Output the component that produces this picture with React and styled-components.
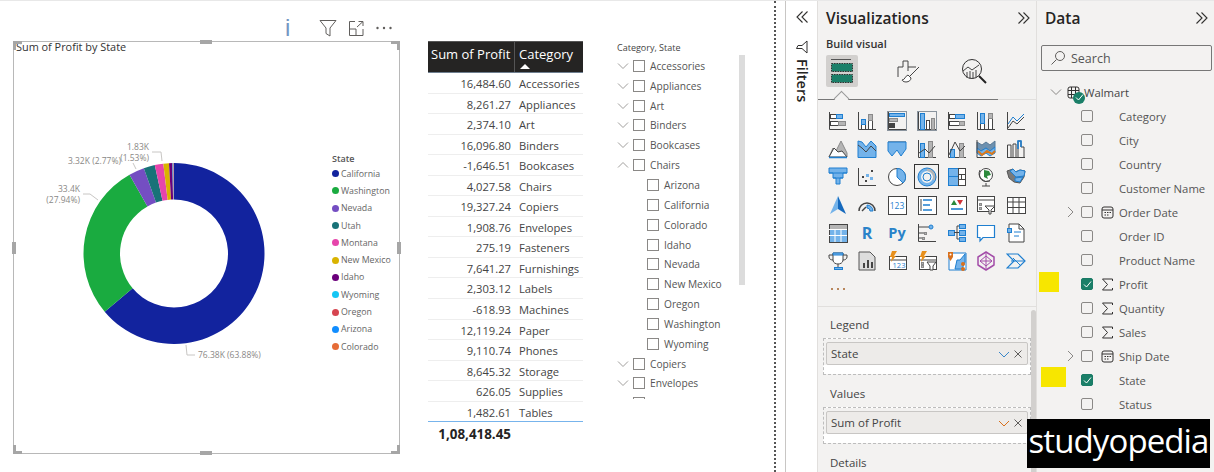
import React from "react";
import styled, { createGlobalStyle } from "styled-components";

const UI_FONT = `"Open Sans", "Noto Sans", sans-serif`;

const GlobalStyle = createGlobalStyle`
  html, body { margin: 0; padding: 0; background: #fff; }
  body { font-family: ${UI_FONT}; color: #252423; overflow: hidden; }
  * { box-sizing: border-box; }
`;

const Page = styled.div`
  position: relative;
  display: flex;
  width: 1214px;
  height: 472px;
  overflow: hidden;
  border-top: 1px solid #e8e8e8;
`;

const Canvas = styled.div`
  display: flex;
  align-items: flex-start;
  width: 776px;
  height: 100%;
  padding-left: 13px;
  border-right: 2px dotted #555;
  margin-right: 9px;
`;

const ChartColumn = styled.div`
  display: flex;
  flex-direction: column;
  width: 388px;
`;

const VisualHeader = styled.div`
  display: flex;
  align-items: center;
  height: 40px;
  padding-top: 14px;
  padding-left: 272px;
`;

const InfoMark = styled.span`
  width: 10px;
  font-size: 24px;
  line-height: 24px;
  color: #7397c2;
  font-family: "Liberation Sans", sans-serif;
  margin-right: 28px;
`;

const HeaderIcon = styled.svg`
  width: 20px;
  height: 20px;
  margin-right: 8px;
  flex: none;
`;

const ChartCard = styled.div`
  position: relative;
  width: 387px;
  height: 413px;
  border: 1px solid #b8b8b8;
`;

const ChartTitle = styled.div`
  height: 14px;
  padding-left: 2px;
  font-size: 10.9px;
  line-height: 10px;
  color: #333;
`;

const ChartBody = styled.div`
  display: flex;
  align-items: flex-start;
`;

const Handle = styled.span`
  position: absolute;
  background: #a6a6a6;
  ${(p) => p.$place}
`;

const CornerHandle = styled.span`
  position: absolute;
  width: 9px;
  height: 9px;
  border-color: #a6a6a6;
  border-style: solid;
  border-width: 0;
  ${(p) => p.$place}
`;

const Legend = styled.div`
  display: flex;
  flex-direction: column;
  padding-top: 96px;
  margin-left: 2px;
`;

const LegendTitle = styled.div`
  font-size: 9px;
  font-weight: 600;
  line-height: 13px;
  color: #555;
`;

const LegendRow = styled.div`
  display: flex;
  align-items: center;
  gap: 2px;
  height: 17.3px;
  font-size: 8.8px;
  color: #666;
  white-space: nowrap;
`;

const LegendDot = styled.span`
  width: 7px;
  height: 7px;
  border-radius: 50%;
  background: ${(p) => p.$color};
`;

const DataTable = styled.div`
  width: 155px;
  margin-left: 27px;
  margin-top: 40px;
`;

const TableHead = styled.div`
  display: grid;
  grid-template-columns: 86px 1fr;
  height: 32px;
  background: #252423;
  border-top: 1px solid #555;
  border-bottom: 1px solid #6f7f90;
  color: #fff;
  font-size: 13px;
`;

const HeadCell = styled.div`
  position: relative;
  padding: 3px 3px;
  line-height: 18px;
  white-space: nowrap;
  & + & { border-left: 1px solid #555; padding-left: 4px; }
`;

const SortArrow = styled.span`
  position: absolute;
  left: 5px;
  bottom: 3px;
  width: 0;
  height: 0;
  border-left: 5px solid transparent;
  border-right: 5px solid transparent;
  border-bottom: 5px solid #fff;
`;

const TableRow = styled.div`
  display: grid;
  grid-template-columns: 83px 1fr;
  column-gap: 8px;
  height: 20.55px;
  border-bottom: 1px solid #eeeeee;
  font-size: 11.2px;
  line-height: 22px;
  color: #444;
  white-space: nowrap;
`;

const NumberCell = styled.div`
  text-align: right;
`;

const TableTotal = styled.div`
  border-top: 1px solid #77b4ec;
  margin-top: -1px;
  font-size: 13.4px;
  font-weight: 700;
  line-height: 24px;
  color: #252423;
`;

const TotalValue = styled.div`
  width: 83px;
  text-align: right;
  white-space: nowrap;
`;

const Slicer = styled.div`
  position: relative;
  width: 130px;
  height: 359px;
  margin-left: 34px;
  margin-top: 40px;
`;

const SlicerTitle = styled.div`
  font-size: 9px;
  line-height: 14px;
  color: #444;
  margin-bottom: 1px;
`;

const SlicerList = styled.div`
  height: 343px;
  overflow: hidden;
`;

const SlicerRow = styled.div`
  display: flex;
  align-items: center;
  height: 19.85px;
  padding-left: ${(p) => (p.$child ? "30px" : "0")};
  font-size: 10.2px;
  color: #555;
  white-space: nowrap;
`;

const Chevron = styled.svg`
  width: 12px;
  height: 12px;
  margin-right: 4px;
  flex: none;
`;

const Box = styled.span`
  display: inline-flex;
  align-items: center;
  justify-content: center;
  width: 12px;
  height: 12px;
  flex: none;
  border: 1px solid ${(p) => (p.$checked ? "#197a65" : "#8a8886")};
  border-radius: ${(p) => (p.$round ? "2px" : "0")};
  background: ${(p) => (p.$checked ? "#1a7f68" : "transparent")};
  margin-right: ${(p) => p.$gap ?? 5}px;
`;

const SlicerScroll = styled.div`
  position: absolute;
  top: 14px;
  left: 122px;
  width: 6px;
  height: 230px;
  background: #dcdcdc;
`;

const FilterRail = styled.div`
  display: flex;
  flex-direction: column;
  align-items: center;
  width: 32px;
  height: 100%;
  flex: none;
  border-left: 1px solid #c8c6c4;
  padding-top: 9px;
`;

const RailIcon = styled.svg`
  margin-top: 16px;
  transform: rotate(90deg);
`;

const RailTitle = styled.div`
  writing-mode: vertical-rl;
  font-size: 14.5px;
  font-weight: 600;
  line-height: 16px;
  margin-top: 5px;
  color: #252423;
`;

const VizPanel = styled.div`
  position: relative;
  display: flex;
  flex-direction: column;
  width: 219px;
  height: 100%;
  flex: none;
  overflow: hidden;
  background: #f3f2f1;
  border-left: 1px solid #e1dfdd;
  & > * { flex: none; }
`;

const PanelHead = styled.div`
  display: flex;
  align-items: center;
  justify-content: space-between;
  height: 34px;
  padding: 0 5px 0 ${(p) => p.$pad}px;
  font-size: 15.5px;
  font-weight: 600;
  color: #252423;
`;

const SubHead = styled.div`
  padding-left: 8px;
  font-size: 11px;
  font-weight: 600;
  line-height: 18px;
  color: #333;
`;

const BuildTabs = styled.div`
  position: relative;
  display: flex;
  align-items: flex-start;
  height: 47px;
  padding: 2px 0 0 8px;
  border-bottom: 1px solid #e1dfdd;
`;

const TabUnderline = styled.span`
  position: absolute;
  left: 0;
  bottom: -1px;
  width: 180px;
  height: 1px;
  background: #777;
`;

const TabNotch = styled.span`
  position: absolute;
  left: 18px;
  bottom: -5px;
  width: 11px;
  height: 11px;
  transform: rotate(45deg);
  background: #f3f2f1;
  border-left: 1px solid #999;
  border-top: 1px solid #999;
`;

const TabButton = styled.span`
  display: flex;
  align-items: center;
  justify-content: center;
  width: 32px;
  height: 32px;
  border-radius: 2px;
  background: ${(p) => (p.$active ? "#d2d0ce" : "transparent")};
  margin-right: ${(p) => p.$gap}px;
`;

const IconGrid = styled.div`
  display: grid;
  grid-template-columns: repeat(7, 29.8px);
  grid-auto-rows: 28px;
  padding: 8px 0 0 7px;
  height: 207px;
  border-bottom: 1px solid #e1dfdd;
`;

const GridCell = styled.span`
  display: flex;
  align-items: center;
  justify-content: center;
  width: 25px;
  height: 25px;
  border: ${(p) => (p.$active ? "1px solid #333" : "1px solid transparent")};
`;

const WellLabel = styled.div`
  padding-left: 12px;
  font-size: 11.5px;
  line-height: 16px;
  color: #444;
  margin: ${(p) => p.$top}px 0 5px;
`;

const FieldWell = styled.div`
  height: 37px;
  margin: 0 5px;
  padding: 3px 2px 0;
  background: linear-gradient(#f3f2f1 26px, #fff 26px);
  border: 1px dashed #bdbdbd;
`;

const FieldPill = styled.div`
  display: flex;
  align-items: center;
  justify-content: space-between;
  height: 23px;
  padding: 0 4px;
  background: #edebe9;
  border: 1px solid #c8c6c4;
  border-radius: 2px;
  font-size: 11.5px;
  color: #444;
`;

const PillIcons = styled.span`
  display: flex;
  gap: 3px;
`;

const PanelScroll = styled.div`
  position: absolute;
  top: 309px;
  right: 0;
  width: 5px;
  height: 170px;
  border-radius: 3px;
  background: #d2d0ce;
`;

const DataPanel = styled.div`
  display: flex;
  flex-direction: column;
  flex: 1;
  height: 100%;
  background: #f3f2f1;
  border-left: 1px solid #e1dfdd;
`;

const SearchBox = styled.div`
  display: flex;
  align-items: center;
  gap: 5px;
  height: 26px;
  margin: 10px 2px 0 4px;
  padding-left: 8px;
  border: 1px solid #777;
  border-radius: 2px;
  font-size: 12.5px;
  color: #555;
`;

const TreeList = styled.div`
  padding-top: 9px;
`;

const ModelRow = styled.div`
  display: flex;
  align-items: center;
  height: 24px;
  padding-left: 13px;
  font-size: 11.3px;
  color: #444;
`;

const ModelIcon = styled.span`
  position: relative;
  display: flex;
  width: 17px;
  margin-left: 1px;
`;

const ModelBadge = styled.span`
  position: absolute;
  left: 6px;
  top: 6px;
  display: flex;
  align-items: center;
  justify-content: center;
  width: 12px;
  height: 12px;
  border-radius: 50%;
  background: #1a7f68;
`;

const FieldRow = styled.div`
  display: grid;
  grid-template-columns: 13px 20px 18px 1fr;
  align-items: center;
  height: 24px;
  padding-left: 31px;
  font-size: 11.3px;
  color: #555;
  white-space: nowrap;
`;

const ExpandSlot = styled.span`
  display: flex;
  margin-left: -4px;
`;

const TypeSlot = styled.span`
  display: flex;
  align-items: center;
`;

const Highlight = styled.span`
  position: absolute;
  background: #f7e600;
  left: ${(p) => p.$x}px;
  top: ${(p) => p.$y}px;
  width: ${(p) => p.$w}px;
  height: 20px;
`;

const Watermark = styled.div`
  position: absolute;
  left: 1027px;
  top: 418px;
  width: 183px;
  height: 49px;
  background: #000;
  color: #fff;
  font-size: 33px;
  letter-spacing: -0.9px;
  line-height: 44px;
  text-align: center;
  white-space: nowrap;
`;

const D = "#444";
const Bl = "#1f7fd0";
const Lb = "#74b3ea";
const Gr = "#b5b5b5";

const R = ({ x, y, w, h, k = "b" }) => {
  const st = {
    b: { fill: Lb, stroke: Bl },
    g: { fill: Gr, stroke: "#8a8a8a" },
    w: { fill: "#fff", stroke: D },
    d: { fill: D, stroke: D },
    n: { fill: "none", stroke: D },
  }[k];
  return <rect x={x + 0.5} y={y + 0.5} width={w} height={h} {...st} strokeWidth="1" />;
};
const Ln = ({ d, c = D, w = 1, f = "none" }) => <path d={d} stroke={c} strokeWidth={w} fill={f} />;
const Axes = () => <Ln d="M1.5 1V18.5H19" />;

const vizIcons = [
  <><Axes /><R x={2} y={3} w={6} h={4} k="w" /><R x={8} y={3} w={6} h={4} /><R x={2} y={10} w={8} h={4} k="w" /><R x={10} y={10} w={7} h={4} k="g" /></>,
  <><Axes /><R x={4} y={8} w={4} h={10} k="w" /><R x={4} y={8} w={4} h={5} /><R x={11} y={3} w={4} h={15} k="w" /><R x={11} y={3} w={4} h={6} k="g" /></>,
  <><rect x="0.5" y="0.5" width="19" height="19" fill="none" stroke="#8a949e" /><Axes /><R x={2} y={2} w={15} h={3} /><R x={2} y={7} w={8} h={3} k="g" /><R x={2} y={12} w={5} h={4} k="d" /></>,
  <><rect x="0.5" y="0.5" width="19" height="19" fill="none" stroke="#8a949e" /><Axes /><R x={3} y={2} w={4} h={16} /><R x={9} y={9} w={3} h={9} k="w" /><R x={14} y={7} w={3} h={11} k="g" /></>,
  <><Ln d="M1.5 1V18.5H19" /><R x={2} y={3} w={8} h={4} k="w" /><R x={8} y={3} w={9} h={4} /><R x={2} y={10} w={10} h={4} k="w" /><R x={12} y={10} w={5} h={4} k="g" /></>,
  <><Axes /><R x={4} y={2} w={4} h={16} k="w" /><R x={4} y={2} w={4} h={10} /><R x={12} y={2} w={4} h={16} k="w" /><R x={12} y={2} w={4} h={5} k="g" /></>,
  <><Axes /><Ln d="M2 13L7 6L11 10L18 3" c={Bl} /><Ln d="M2 17L7 10L11 13L18 6" c={D} /></>,
  <><Ln d="M1 18L5 9L8 12L13 2L19 14V18Z" f={Gr} c="#8a8a8a" /><Ln d="M1 18L6 9L10 13L14 12L19 18Z" f="#fff" c={D} /><Ln d="M1 18.5H19" c={Bl} w={1.5} /></>,
  <><Ln d="M1 2V18.5H19V7L14 2L9 8L5 3Z" f={Lb} c={Bl} /><Ln d="M1 6L5 9L9 13L14 7L19 12" c={D} /></>,
  <><Ln d="M1 3H19" c={D} /><Ln d="M1 3H19V10L14 17L10 11L5 17L1 12Z" f={Lb} c={Bl} /></>,
  <><Axes /><R x={3} y={4} w={4} h={14} /><R x={11} y={2} w={4} h={16} k="g" /><Ln d="M2 14L8 10L12 14L18 7" /></>,
  <><Axes /><R x={3} y={10} w={4} h={8} /><R x={12} y={4} w={4} h={14} k="g" /><Ln d="M2 16L8 3L13 12L18 7" /></>,
  <><Ln d="M1 3L6 6L10 3L14 6L19 2V8L14 12L10 9L5 12L1 9Z" f="#6d91b0" c="#5a7a96" /><Ln d="M1 9L5 12L10 9L14 12L19 8V14L14 17L10 14L5 17L1 14Z" f={Lb} c={Bl} /><Ln d="M2 12L6 16L11 12L16 15L19 12" c="#d9781c" w={2} /><Ln d="M1 1V18.5H19" /></>,
  <><Ln d="M1.5 18V6H5V18M7 18V5H10V18M12 18V2H15V8H18V18" /><Ln d="M12 10V2H15V8" c={Bl} w={1.6} /><Ln d="M1 18.5H19" /></>,
  <><Ln d="M1 1H19V6H15V11H12V17H8V11H5V6H1Z" f={Lb} c={Bl} /><Ln d="M1 6H19M5 11H15" c={Bl} /></>,
  <><Axes /><rect x="5" y="9" width="2" height="2" fill={D} /><rect x="9" y="7" width="3" height="3" fill={Lb} /><rect x="14" y="3" width="2" height="2" fill={D} /><rect x="13" y="10" width="3" height="3" fill={Lb} /><rect x="8" y="13" width="2" height="2" fill={D} /></>,
  <><circle cx="10" cy="10" r="8.5" fill="#fff" stroke={D} /><path d="M10 10V1.5A8.5 8.5 0 0 1 16 16Z" fill={Lb} stroke={Bl} /></>,
  <><circle cx="10" cy="10" r="7.5" fill="none" stroke={Lb} strokeWidth="3" /><path d="M10 2.5A7.5 7.5 0 0 1 17 13" fill="none" stroke={Gr} strokeWidth="3" /><circle cx="10" cy="10" r="4" fill="none" stroke={Bl} /><circle cx="10" cy="10" r="9" fill="none" stroke={Bl} /></>,
  <><R x={1} y={1} w={10} h={8} /><R x={1} y={9} w={10} h={9} /><R x={11} y={1} w={7} h={6} k="w" /><R x={11} y={7} w={3} h={5} k="w" /><R x={14} y={7} w={4} h={5} k="w" /><R x={11} y={12} w={7} h={6} k="w" /></>,
  <><circle cx="10" cy="8" r="6.5" fill="#fff" stroke={D} /><path d="M8 3L13 4L15 8L11 9L12 12L8 10Z" fill="#2c8a3c" /><Ln d="M14 14A8 8 0 0 1 4 3M10 16V19M6 19H14" /></>,
  <><Ln d="M1 4L7 2L9 5L14 3L19 4L18 10L14 16L8 15L3 11Z" f="#7a7a7a" c="#555" /><Ln d="M7 2L10 5L14 3L19 4L18 9L10 10L4 4Z" f={Lb} c={Bl} /><Ln d="M9 11L17 10L14 15L9 14Z" f={Lb} c={Bl} /></>,
  <><path d="M10 1L18 19L10 14Z" fill="#1569bd" /><path d="M10 1L2 19L10 14Z" fill="#74b3ea" /></>,
  <><path d="M2 16A8 8 0 0 1 18 16" fill="none" stroke={D} strokeWidth="1.5" /><path d="M10 10A6 6 0 0 1 16 16H13A3 3 0 0 0 10 13Z" fill={Lb} stroke={Bl} /><Ln d="M5 16L9 12" w={1.5} /></>,
  <><R x={1} y={1} w={18} h={18} k="w" /><text x="10" y="14" textAnchor="middle" fontSize="8.5" fill={Bl} fontFamily={UI_FONT}>123</text></>,
  <><R x={1} y={1} w={18} h={18} k="w" /><Ln d="M4 4V16" c={D} /><Ln d="M6 5H15M6 10H13M6 15H15" c={Bl} w={1.6} /></>,
  <><R x={1} y={1} w={18} h={18} k="w" /><path d="M4 10L7 5L10 10Z" fill="#2c8a3c" /><path d="M10 5H16L13 10Z" fill="#d13438" /><Ln d="M4 14H16" c={Bl} w={1.6} /></>,
  <><R x={1} y={1} w={17} h={15} k="w" /><Ln d="M1 5H18" /><R x={3} y={8} w={2} h={2} k="g" /><R x={3} y={12} w={2} h={2} k="g" /><Ln d="M9 11H19L15 15V19H13V15Z" f="#fff" /></>,
  <><R x={1} y={2} w={18} h={16} k="w" /><Ln d="M1 7H19M1 12.5H19M7 2V18M13 2V18" /></>,
  <><R x={1} y={1} w={18} h={18} k="n" /><rect x="2" y="2" width="17" height="4" fill={Gr} /><rect x="2" y="7" width="17" height="12" fill={Lb} /><Ln d="M1 6.5H19M1 12.5H19M7 6V19M13 6V19" c="#fff" /></>,
  <><text x="10" y="16" textAnchor="middle" fontSize="16" fontWeight="700" fill="#2a83c9" fontFamily={UI_FONT}>R</text></>,
  <><text x="10" y="15" textAnchor="middle" fontSize="14.5" fontWeight="700" fill="#2a83c9" fontFamily={UI_FONT}>Py</text></>,
  <><Axes /><Ln d="M2 4H12M2 10H7M2 15H5" /><circle cx="14" cy="4" r="2" fill={Lb} stroke={Bl} /><R x={7} y={9} w={2} h={2} k="g" /><R x={5} y={14} w={2} h={2} k="g" /></>,
  <><R x={1} y={7} w={6} h={5} /><R x={12} y={1} w={6} h={4} /><R x={12} y={7} w={6} h={5} /><R x={12} y={14} w={6} h={4} /><Ln d="M7 9.5H12M10 3V16H12M10 3H12" /></>,
  <><path d="M1.5 2.5H18.5V14.5H7L4 18V14.5H1.5Z" fill="#fff" stroke={Bl} strokeWidth="1.2" /></>,
  <><Ln d="M3 1H13L18 6V19H3Z" f="#fff" /><Ln d="M13 1V6H18" /><R x={1} y={5} w={4} h={4} /><Ln d="M8 9H15M8 13H13" c={Bl} /></>,
  <><Ln d="M5 2H15V9C15 12 12 13 10 13C8 13 5 12 5 9Z" f="#fff" /><Ln d="M5 2H15V4H5Z" f={Lb} c={Bl} /><Ln d="M5 4H1V6C1 8 3 9 5 9M15 4H19V6C19 8 17 9 15 9M10 13V16" /><R x={6} y={16} w={8} h={2} /></>,
  <><Ln d="M2 1H13L18 6V19H2Z" f="#ddd" c="#555" /><rect x="6" y="12" width="2" height="5" fill={D} /><rect x="10" y="9" width="2" height="8" fill={D} /><rect x="14" y="11" width="2" height="6" fill={D} /></>,
  <><R x={2} y={5} w={17} h={13} k="w" /><Ln d="M2 9H19" /><text x="12" y="16.5" textAnchor="middle" fontSize="7.5" fill={Bl} fontFamily={UI_FONT}>123</text><path d="M5 0H10L7 5H9L4 11L5 6H3Z" fill="#e8901c" /></>,
  <><R x={2} y={5} w={17} h={13} k="w" /><Ln d="M2 9H19" /><R x={4} y={11} w={2} h={2} k="g" /><R x={4} y={14} w={2} h={2} k="g" /><Ln d="M10 11H19L16 15V19H13V15Z" f="#fff" /><path d="M5 0H10L7 5H9L4 11L5 6H3Z" fill="#e8901c" /></>,
  <><Ln d="M2 2H19V19H2Z" f="#fff" c={Bl} /><Ln d="M8 18L10 9L13 9L18 3V11L15 18Z" f={Lb} c={Bl} /><path d="M1 1H6V6L3.5 10L1 6Z" fill="#d9701c" /><circle cx="3.5" cy="3.5" r="1" fill="#fff" /><circle cx="16" cy="13" r="2" fill="#d9701c" /><circle cx="16" cy="18" r="2" fill="#d9701c" /></>,
  <><path d="M10 1L18 6V14L10 19L2 14V6Z" fill="none" stroke="#a34ca8" strokeWidth="1.5" strokeLinejoin="round" /><path d="M10 1V19M4 10H16M4 10L10 5L16 10L10 15Z" fill="none" stroke="#a34ca8" /></>,
  <><path d="M1 3H12L19 10L12 17H1L8 10Z" fill="none" stroke={Bl} strokeWidth="1.2" /><Ln d="M5 10H19M7 7L15 15" c={Bl} /></>,
];

const Chev = ({ dir = "down", c = "#8a8886" }) => {
  const d = { down: "M1 3.5L6 8.5L11 3.5", up: "M1 8.5L6 3.5L11 8.5", right: "M4 1L9 6L4 11" }[dir];
  return (
    <Chevron viewBox="0 0 12 12">
      <path d={d} fill="none" stroke={c} strokeWidth="1" />
    </Chevron>
  );
};

const Double = ({ left }) => (
  <svg width="14" height="14" viewBox="0 0 14 14" style={left ? { transform: "scaleX(-1)" } : undefined}>
    <path d="M1.5 1.5L7 7L1.5 12.5M6.5 1.5L12 7L6.5 12.5" fill="none" stroke="#323130" strokeWidth="1.1" />
  </svg>
);

const SmallX = () => (
  <svg width="10" height="10" viewBox="0 0 10 10">
    <path d="M1.5 1.5L8.5 8.5M8.5 1.5L1.5 8.5" stroke="#605e5c" />
  </svg>
);

const SmallDown = ({ c }) => (
  <svg width="12" height="10" viewBox="0 0 12 10">
    <path d="M1 3L6 8L11 3" fill="none" stroke={c} />
  </svg>
);

const Sigma = () => (
  <svg width="13" height="13" viewBox="0 0 13 13">
    <path d="M11.5 3V1H1.5L6.5 6.5L1.5 12H11.5V10" fill="none" stroke="#323130" />
  </svg>
);

const Calendar = () => (
  <svg width="13" height="13" viewBox="0 0 13 13">
    <rect x="1" y="1" width="11" height="11" rx="2" fill="none" stroke="#323130" />
    <path d="M1 4H12" stroke="#323130" />
    <path d="M3.5 6.5H5M6 6.5H7.5M8.5 6.5H10M3.5 9H5M6 9H7.5" stroke="#323130" />
  </svg>
);

const Tick = () => (
  <svg width="9" height="9" viewBox="0 0 9 9">
    <path d="M1 4.5L3.5 7L8 1.5" fill="none" stroke="#fff" strokeWidth="1" />
  </svg>
);

const slices = [
  ["California", 63.88, "#12239E"],
  ["Washington", 27.94, "#1AAB40"],
  ["Nevada", 2.77, "#744EC2"],
  ["Utah", 2.0, "#197278"],
  ["Montana", 1.53, "#E645AB"],
  ["New Mexico", 1.0, "#D9B300"],
  ["Idaho", 0.6, "#6B007B"],
  ["Wyoming", 0.08, "#15C6F4"],
  ["Oregon", 0.08, "#D64550"],
  ["Arizona", 0.06, "#118DFF"],
  ["Colorado", 0.06, "#E66C37"],
];

const arc = (from, to) => {
  const [cx, cy, ro, ri] = [174, 253.5, 90.5, 54];
  const pt = (a, r) => {
    const t = (a / 100) * 2 * Math.PI;
    return `${(cx + r * Math.sin(t)).toFixed(2)} ${(cy - r * Math.cos(t)).toFixed(2)}`;
  };
  const big = to - from > 50 ? 1 : 0;
  return `M${pt(from, ro)}A${ro} ${ro} 0 ${big} 1 ${pt(to, ro)}L${pt(to, ri)}A${ri} ${ri} 0 ${big} 0 ${pt(from, ri)}Z`;
};

const donutPaths = slices.reduce(
  (acc, [name, pct, color]) => {
    acc.list.push(<path key={name} d={arc(acc.at, acc.at + pct)} fill={color} />);
    acc.at += pct;
    return acc;
  },
  { at: 0, list: [] }
).list;

const rows = [
  ["16,484.60", "Accessories"], ["8,261.27", "Appliances"], ["2,374.10", "Art"], ["16,096.80", "Binders"],
  ["-1,646.51", "Bookcases"], ["4,027.58", "Chairs"], ["19,327.24", "Copiers"], ["1,908.76", "Envelopes"],
  ["275.19", "Fasteners"], ["7,641.27", "Furnishings"], ["2,303.12", "Labels"], ["-618.93", "Machines"],
  ["12,119.24", "Paper"], ["9,110.74", "Phones"], ["8,645.32", "Storage"], ["626.05", "Supplies"], ["1,482.61", "Tables"],
];

const slicerItems = [
  ["Accessories"], ["Appliances"], ["Art"], ["Binders"], ["Bookcases"], ["Chairs", "open"],
  ["Arizona", "child"], ["California", "child"], ["Colorado", "child"], ["Idaho", "child"], ["Nevada", "child"],
  ["New Mexico", "child"], ["Oregon", "child"], ["Washington", "child"], ["Wyoming", "child"],
  ["Copiers"], ["Envelopes"], ["Fasteners"],
];

const fields = [
  ["Category"], ["City"], ["Country"], ["Customer Name"], ["Order Date", "date"], ["Order ID"], ["Product Name"],
  ["Profit", "sum", true], ["Quantity", "sum"], ["Sales", "sum"], ["Ship Date", "date"], ["State", null, true], ["Status"],
];

const ChartLabel = ({ x, y, children, end }) => (
  <text x={x} y={y} fontSize="8.5" fill="#8a8886" textAnchor={end ? "end" : "start"} fontFamily={UI_FONT}>
    {children}
  </text>
);

export default function App() {
  return (
    <>
      <GlobalStyle />
      <Page>
        <Canvas>
          <ChartColumn>
            <VisualHeader>
              <InfoMark>i</InfoMark>
              <HeaderIcon viewBox="0 0 20 20">
                <path d="M2 2.5H18L12 10V18L8 15.5V10Z" fill="none" stroke="#605e5c" />
              </HeaderIcon>
              <HeaderIcon viewBox="0 0 20 20">
                <path d="M9 3.5H3.5V17.5H17V11M3.5 11H10V17.5M11 9L17 3.5M12.5 3.5H17V8" fill="none" stroke="#605e5c" />
              </HeaderIcon>
              <HeaderIcon viewBox="0 0 20 20">
                <circle cx="3.5" cy="10" r="1.2" fill="#605e5c" />
                <circle cx="10" cy="10" r="1.2" fill="#605e5c" />
                <circle cx="16.5" cy="10" r="1.2" fill="#605e5c" />
              </HeaderIcon>
            </VisualHeader>
            <ChartCard>
              <CornerHandle $place="left:-1px;top:-1px;border-left-width:3px;border-top-width:3px;" />
              <CornerHandle $place="right:-1px;top:-1px;border-right-width:3px;border-top-width:3px;" />
              <CornerHandle $place="left:-1px;bottom:-1px;border-left-width:3px;border-bottom-width:3px;" />
              <CornerHandle $place="right:-1px;bottom:-1px;border-right-width:3px;border-bottom-width:3px;" />
              <Handle $place="left:186px;top:-2px;width:12px;height:4px;" />
              <Handle $place="left:186px;bottom:-2px;width:12px;height:4px;" />
              <Handle $place="left:-2px;top:200px;width:4px;height:12px;" />
              <Handle $place="right:-2px;top:200px;width:4px;height:12px;" />
              <ChartTitle>Sum of Profit by State</ChartTitle>
              <ChartBody>
                <svg width="316" height="396" viewBox="14 56 316 396" style={{ flex: "none" }}>
                  {donutPaths}
                  <Ln d="M152 152H161L162 161" c="#c8c6c4" />
                  <Ln d="M133 163L136 169" c="#c8c6c4" />
                  <Ln d="M83 194H90L98 200" c="#c8c6c4" />
                  <Ln d="M186 345L187 355H195" c="#c8c6c4" />
                  <ChartLabel x={149} y={150} end>1.83K</ChartLabel>
                  <ChartLabel x={149} y={161} end>(1.53%)</ChartLabel>
                  <ChartLabel x={121} y={164} end>3.32K (2.77%)</ChartLabel>
                  <ChartLabel x={80} y={192} end>33.4K</ChartLabel>
                  <ChartLabel x={80} y={203} end>(27.94%)</ChartLabel>
                  <ChartLabel x={198} y={358}>76.38K (63.88%)</ChartLabel>
                </svg>
                <Legend>
                  <LegendTitle>State</LegendTitle>
                  {slices.map(([name, , color]) => (
                    <LegendRow key={name}>
                      <LegendDot $color={color} />
                      {name}
                    </LegendRow>
                  ))}
                </Legend>
              </ChartBody>
            </ChartCard>
          </ChartColumn>

          <DataTable>
            <TableHead>
              <HeadCell>Sum of Profit</HeadCell>
              <HeadCell>
                Category
                <SortArrow />
              </HeadCell>
            </TableHead>
            {rows.map(([value, name]) => (
              <TableRow key={name}>
                <NumberCell>{value}</NumberCell>
                <div>{name}</div>
              </TableRow>
            ))}
            <TableTotal>
              <TotalValue>1,08,418.45</TotalValue>
            </TableTotal>
          </DataTable>

          <Slicer>
            <SlicerTitle>Category, State</SlicerTitle>
            <SlicerList>
              {slicerItems.map(([name, kind], i) => (
                <SlicerRow key={name + i} $child={kind === "child"}>
                  {kind !== "child" && <Chev dir={kind === "open" ? "up" : "down"} c="#a19f9d" />}
                  <Box />
                  {name}
                </SlicerRow>
              ))}
            </SlicerList>
            <SlicerScroll />
          </Slicer>
        </Canvas>

        <FilterRail>
          <Double left />
          <RailIcon width="14" height="14" viewBox="0 0 14 14">
            <path d="M1 2H13L8.5 7V12.5L5.5 11V7Z" fill="none" stroke="#323130" />
          </RailIcon>
          <RailTitle>Filters</RailTitle>
        </FilterRail>

        <VizPanel>
          <PanelHead $pad={8}>
            Visualizations
            <Double />
          </PanelHead>
          <SubHead>Build visual</SubHead>
          <BuildTabs>
            <TabButton $active $gap={35}>
              <svg width="24" height="26" viewBox="0 0 24 26">
                <path d="M1 1.5H21" stroke="#555" />
                <rect x="1.5" y="5.5" width="21" height="8" fill="#1a7f68" stroke="#333" strokeDasharray="1.5 1" />
                <rect x="1.5" y="16.5" width="21" height="8" fill="#1a7f68" stroke="#333" strokeDasharray="1.5 1" />
              </svg>
            </TabButton>
            <TabButton $gap={33}>
              <svg width="24" height="24" viewBox="0 0 24 24">
                <path d="M1 18V8H6V2H11V12M11 8H19" fill="none" stroke="#444" />
                <path d="M22 8L13 17M9 23C6 23 5 21 5 21C8 21 8 17 11 16L14 19C14 21 12 23 9 23Z" fill="#fff" stroke="#444" />
              </svg>
            </TabButton>
            <TabButton $gap={0}>
              <svg width="26" height="26" viewBox="0 0 26 26">
                <circle cx="11" cy="11" r="9.5" fill="none" stroke="#333" />
                <path d="M2 13L7 9L11 12L18 7" fill="none" stroke="#444" />
                <path d="M6 14V20M9 13V21M12 14V21M15 12V20" stroke="#444" />
                <path d="M18 18L25 25" stroke="#222" strokeWidth="2" />
              </svg>
            </TabButton>
            <TabUnderline />
            <TabNotch />
          </BuildTabs>
          <IconGrid>
            {vizIcons.map((icon, i) => (
              <GridCell key={i} $active={i === 17}>
                <svg width="20" height="20" viewBox="0 0 20 20">
                  {icon}
                </svg>
              </GridCell>
            ))}
            <GridCell>
              <svg width="16" height="4" viewBox="0 0 16 4">
                <circle cx="2" cy="2" r="1" fill="#a4622a" />
                <circle cx="8" cy="2" r="1" fill="#a4622a" />
                <circle cx="14" cy="2" r="1" fill="#a4622a" />
              </svg>
            </GridCell>
          </IconGrid>
          <WellLabel $top={10}>Legend</WellLabel>
          <FieldWell>
            <FieldPill>
              State
              <PillIcons>
                <SmallDown c="#3a86c8" />
                <SmallX />
              </PillIcons>
            </FieldPill>
          </FieldWell>
          <WellLabel $top={11}>Values</WellLabel>
          <FieldWell>
            <FieldPill>
              Sum of Profit
              <PillIcons>
                <SmallDown c="#d9701c" />
                <SmallX />
              </PillIcons>
            </FieldPill>
          </FieldWell>
          <WellLabel $top={11}>Details</WellLabel>
          <PanelScroll />
        </VizPanel>

        <DataPanel>
          <PanelHead $pad={8}>
            Data
            <Double />
          </PanelHead>
          <SearchBox>
            <svg width="16" height="16" viewBox="0 0 16 16">
              <circle cx="10" cy="6" r="4.5" fill="none" stroke="#605e5c" />
              <path d="M6.5 9.5L1.5 14.5" stroke="#605e5c" />
            </svg>
            Search
          </SearchBox>
          <TreeList>
            <ModelRow>
              <Chev c="#8a8886" />
              <ModelIcon>
                <svg width="13" height="13" viewBox="0 0 13 13">
                  <rect x="1" y="1" width="11" height="11" rx="2" fill="none" stroke="#323130" />
                  <path d="M1 4.5H12M1 8.5H12M4.5 1V12M8.5 1V12" stroke="#323130" />
                </svg>
                <ModelBadge>
                  <Tick />
                </ModelBadge>
              </ModelIcon>
              Walmart
            </ModelRow>
            {fields.map(([name, kind, checked]) => (
              <FieldRow key={name}>
                <ExpandSlot>{kind === "date" && <Chev dir="right" />}</ExpandSlot>
                <Box $checked={checked} $round $gap={0}>
                  {checked && <Tick />}
                </Box>
                <TypeSlot>
                  {kind === "sum" && <Sigma />}
                  {kind === "date" && <Calendar />}
                </TypeSlot>
                {name}
              </FieldRow>
            ))}
          </TreeList>
        </DataPanel>

        <Highlight $x={1039} $y={271} $w={20} />
        <Highlight $x={1041} $y={366} $w={25} />
        <Watermark>studyopedia</Watermark>
      </Page>
    </>
  );
}
